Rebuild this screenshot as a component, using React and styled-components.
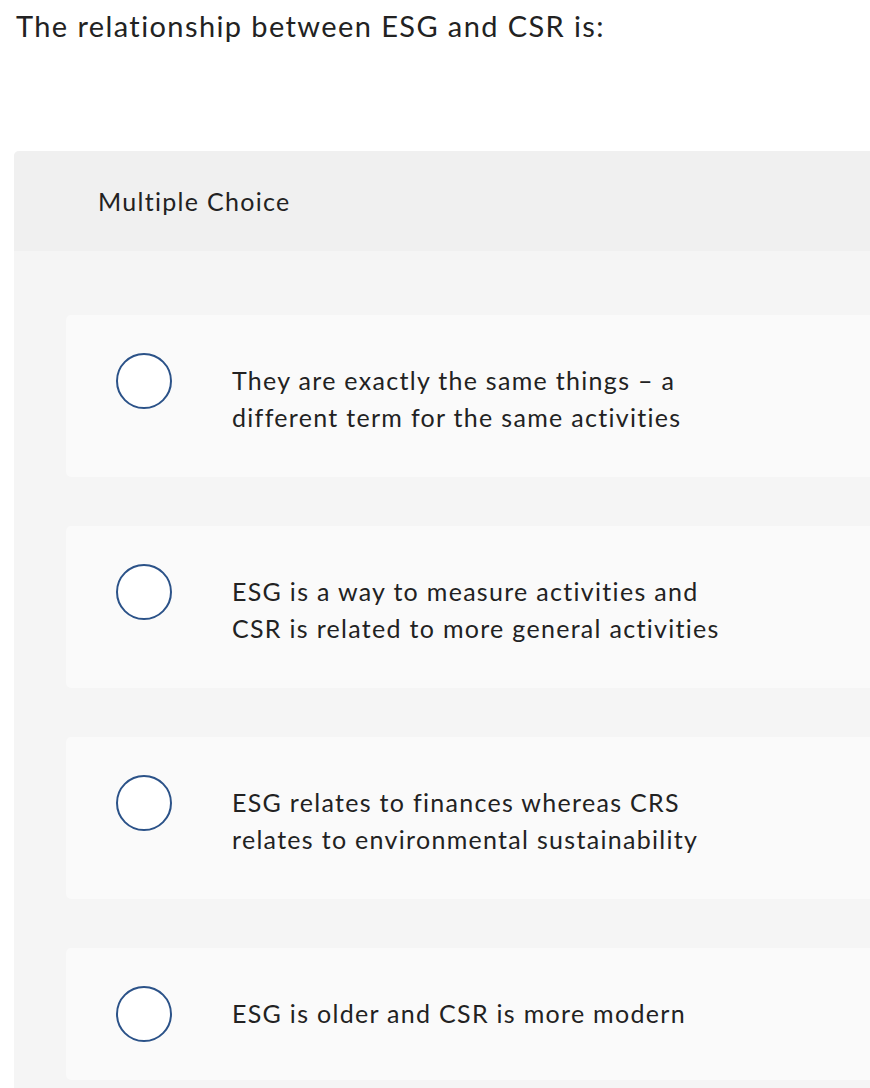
import React from "react";
import styled, { createGlobalStyle } from "styled-components";

const Global = createGlobalStyle`
  html, body { margin: 0; padding: 0; background: #ffffff; overflow: hidden; }
  body { font-family: Lato, "Open Sans", sans-serif; color: #222222; }
`;

const Page = styled.div`
  width: 870px;
  height: 1088px;
  overflow: hidden;
`;

const Question = styled.h1`
  margin: 0;
  padding: 7px 0 0 16px;
  font-size: 29px;
  font-weight: 400;
  line-height: 38px;
  letter-spacing: 1.4px;
  color: #222222;
`;

const Panel = styled.section`
  margin: 106px 0 0 14px;
  width: 900px;
  border-radius: 5px 0 0 0;
  background: #f5f5f5;
  padding-bottom: 40px;
`;

const PanelHeader = styled.div`
  height: 100px;
  display: flex;
  align-items: center;
  padding-left: 84px;
  background: #f0f0f0;
  border-radius: 5px 0 0 0;
  font-size: 25px;
  letter-spacing: 1.3px;
  color: #222222;
`;

const Options = styled.div`
  display: flex;
  flex-direction: column;
  gap: 49px;
  padding: 64px 0 0 52px;
`;

const Card = styled.label`
  display: flex;
  align-items: flex-start;
  gap: 60px;
  padding: 38px 0 38px 50px;
  background: #fafafa;
  border-radius: 5px 0 0 5px;
`;

const Radio = styled.span`
  flex: none;
  width: 52px;
  height: 52px;
  border: 2px solid #2b5288;
  border-radius: 50%;
  background: #ffffff;
`;

const OptionText = styled.span`
  padding: 9px 0 3px;
  font-size: 25px;
  line-height: 37px;
  letter-spacing: 1.3px;
  color: #222222;
`;

const options = [
  ["They are exactly the same things – a", "different term for the same activities"],
  ["ESG is a way to measure activities and", "CSR is related to more general activities"],
  ["ESG relates to finances whereas CRS", "relates to environmental sustainability"],
  ["ESG is older and CSR is more modern"],
];

export default function App() {
  return (
    <Page>
      <Global />
      <Question>The relationship between ESG and CSR is:</Question>
      <Panel>
        <PanelHeader>Multiple Choice</PanelHeader>
        <Options>
          {options.map((lines, i) => (
            <Card key={i}>
              <Radio />
              <OptionText>
                {lines.map((l, j) => (
                  <React.Fragment key={j}>
                    {l}
                    {j < lines.length - 1 && <br />}
                  </React.Fragment>
                ))}
              </OptionText>
            </Card>
          ))}
        </Options>
      </Panel>
    </Page>
  );
}
